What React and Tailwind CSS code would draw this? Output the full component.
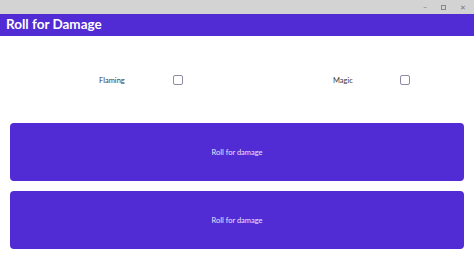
import React, { useState } from 'react'

const FONT = { fontFamily: 'Lato, "Open Sans", sans-serif' }

function Check({ label, width, checked, onChange }) {
  return (
    <div className="flex items-center">
      <span className="text-[7.5px] text-[#3a3a3a] pt-[1px]" style={{ width }}>{label}</span>
      <button
        onClick={onChange}
        className={`w-[10px] h-[10px] rounded-[2px] border ${checked ? 'bg-[#512bd4] border-[#512bd4]' : 'border-[#8e89a6] bg-white'}`}
      />
    </div>
  )
}

export default function App() {
  const [flaming, setFlaming] = useState(false)
  const [magic, setMagic] = useState(false)

  return (
    <div className="w-[474px] h-[259px] bg-white flex flex-col overflow-hidden" style={FONT}>
      {/* title bar */}
      <div className="h-[14px] bg-[#d3d3d3] flex items-center justify-end gap-[14px] pr-[8px] text-[7px] text-[#777]">
        <span>–</span>
        <span className="w-[5px] h-[5px] border border-[#888]" />
        <span>✕</span>
      </div>

      {/* header */}
      <div className="h-[22px] bg-[#512bd4] flex items-center px-[6px]">
        <span className="text-white text-[13.5px] font-bold leading-none">Roll for Damage</span>
      </div>

      {/* options */}
      <div className="flex mt-[39px] h-[10px] items-center">
        <div className="ml-[99px]">
          <Check label="Flaming" width={74} checked={flaming} onChange={() => setFlaming(!flaming)} />
        </div>
        <div className="ml-[150px]">
          <Check label="Magic" width={67} checked={magic} onChange={() => setMagic(!magic)} />
        </div>
      </div>

      <div className="flex flex-col gap-[10px] px-[10px] mt-[38px]">
        <button className="h-[58px] rounded-[4px] bg-[#512bd4] text-[#e8e2ff] text-[7.5px] pt-[1px]">Roll for damage</button>
        <button className="h-[58px] rounded-[4px] bg-[#512bd4] text-[#e8e2ff] text-[7.5px] pt-[1px]">Roll for damage</button>
      </div>
    </div>
  )
}
